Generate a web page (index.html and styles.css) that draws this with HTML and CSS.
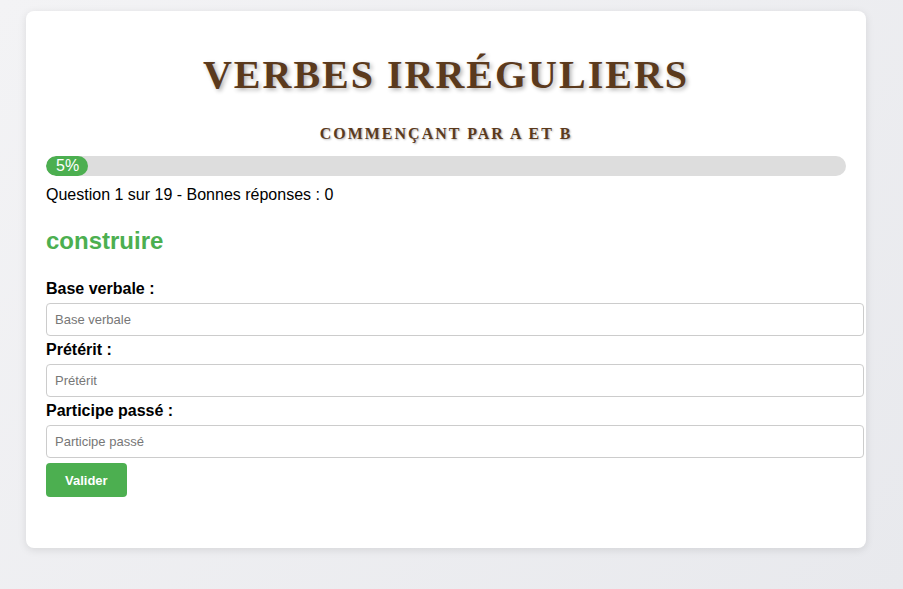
FILE: index.html
```html
<!DOCTYPE html>
<html lang="fr">
<head>
<meta charset="utf-8">
<title>Verbes irréguliers</title>
<link rel="stylesheet" href="styles.css">
</head>
<body>
<div class="card">
  <h1 class="title">Verbes irréguliers</h1>
  <h2 class="subtitle">Commençant par A et B</h2>
  <div class="progress">
    <div class="progress-fill" style="width: 5.26%">5%</div>
  </div>
  <p class="status">Question 1 sur 19 - Bonnes réponses : 0</p>
  <h3 class="verb">construire</h3>
  <form class="quiz">
    <label class="field-label" for="base">Base verbale :</label>
    <input class="field" id="base" type="text" placeholder="Base verbale">
    <label class="field-label" for="pret">Prétérit :</label>
    <input class="field" id="pret" type="text" placeholder="Prétérit">
    <label class="field-label" for="pp">Participe passé :</label>
    <input class="field" id="pp" type="text" placeholder="Participe passé">
    <button class="submit" type="button">Valider</button>
  </form>
</div>
</body>
</html>
```
FILE: styles.css
```css
html, body {
  margin: 0;
  padding: 0;
}
body {
  min-height: 589px;
  background: linear-gradient(135deg, #f3f3f5 0%, #e8e9ed 100%);
  font-family: "Liberation Sans", Arial, sans-serif;
  color: #000;
  padding: 11px 0 0 26px;
  box-sizing: border-box;
}
.card {
  width: 800px;
  padding: 20px 20px 51px;
  background: #fff;
  border-radius: 8px;
  box-shadow: 0 2px 8px rgba(0, 0, 0, 0.1);
}
.title {
  margin: 20px 0 0;
  text-align: center;
  font-family: "Liberation Serif", "Times New Roman", serif;
  font-size: 40px;
  font-weight: bold;
  letter-spacing: 2px;
  text-transform: uppercase;
  color: #5b3a1d;
  text-shadow: 2px 2px 4px rgba(0, 0, 0, 0.3);
}
.subtitle {
  margin: 27px 0 13px;
  text-align: center;
  font-family: "Liberation Serif", "Times New Roman", serif;
  font-size: 16px;
  font-weight: bold;
  letter-spacing: 2px;
  text-transform: uppercase;
  color: #5b3a1d;
  text-shadow: 1px 1px 2px rgba(0, 0, 0, 0.3);
}
.progress {
  height: 20px;
  background: #ddd;
  border-radius: 10px;
  overflow: hidden;
}
.progress-fill {
  height: 100%;
  background: #4caf50;
  border-radius: 10px;
  color: #fff;
  font-size: 16px;
  line-height: 20px;
  padding-left: 10px;
  box-sizing: border-box;
}
.status {
  margin: 10px 0 0;
  font-size: 16px;
}
.verb {
  margin: 23px 0 0;
  font-size: 24px;
  font-weight: bold;
  color: #4caf50;
}
.quiz {
  display: flex;
  flex-direction: column;
  align-items: flex-start;
  margin-top: 25px;
}
.field-label {
  font-size: 16px;
  font-weight: bold;
  margin-bottom: 5px;
}
.field {
  height: 33px;
  width: 818px;
  padding: 0 8px;
  margin-bottom: 5px;
  border: 1px solid #ccc;
  border-radius: 4px;
  font-family: "Liberation Sans", Arial, sans-serif;
  font-size: 13px;
  box-sizing: border-box;
}
.field::placeholder {
  color: #777;
}
.submit {
  height: 34px;
  padding: 0 19px;
  background: #4caf50;
  color: #fff;
  border: none;
  border-radius: 4px;
  font-family: "Liberation Sans", Arial, sans-serif;
  font-size: 13px;
  font-weight: bold;
}
```
